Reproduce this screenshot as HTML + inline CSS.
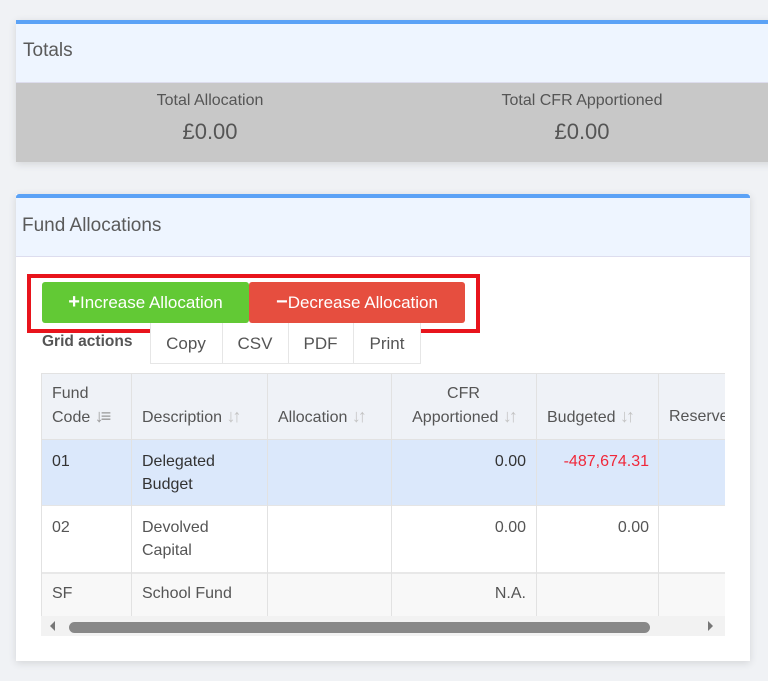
<!DOCTYPE html>
<html><head><style>
body{margin:0;width:768px;height:681px;background:#f0f2f5;font-family:"Liberation Sans",sans-serif;color:#555;position:relative;overflow:hidden}
.a{position:absolute}
.card{position:absolute;background:#fff;box-shadow:0 2px 8px rgba(0,0,0,.12)}
.c{position:absolute;text-align:center;font-size:16px}
.th{position:absolute;box-sizing:border-box;font-size:16px;line-height:23px;padding:0 11px}
.sort{color:#c4c4c4;font-size:18px;letter-spacing:-3px;font-weight:bold}
.t{position:absolute;font-size:16px;line-height:23px}
</style></head><body>
<div class="card" style="left:16px;top:20px;width:760px;height:142px">
 <div class="a" style="left:0;top:0;right:0;height:4px;background:#5ba2f6"></div>
 <div class="a" style="left:0;top:4px;right:0;height:58px;background:#eef5ff;border-bottom:1px solid #dde"></div>
 <div class="a" style="left:7px;top:20px;font-size:19px;color:#5a5a5a">Totals</div>
 <div class="a" style="left:0;top:63px;right:0;height:79px;background:#c8c8c8"></div>
 <div class="c" style="left:60px;width:268px;top:72px">Total Allocation</div>
 <div class="c" style="left:60px;width:268px;top:99px;font-size:22px">£0.00</div>
 <div class="c" style="left:432px;width:268px;top:72px">Total CFR Apportioned</div>
 <div class="c" style="left:432px;width:268px;top:99px;font-size:22px">£0.00</div>
</div>
<div class="card" style="left:16px;top:194px;width:734px;height:467px">
 <div class="a" style="left:0;top:0;right:0;height:4px;background:#5ba2f6;border-radius:3px 3px 0 0"></div>
 <div class="a" style="left:0;top:4px;right:0;height:58px;background:#eef5ff;border-bottom:1px solid #dde"></div>
 <div class="a" style="left:6px;top:21px;font-size:19px;color:#5a5a5a">Fund Allocations</div>
</div>
<div class="a" style="left:27px;top:274px;width:445px;height:51px;border:4px solid #e8141c"></div>
<div class="a" style="left:42px;top:282px;width:207px;height:41px;background:#62c935;border-radius:3px;color:#fff;font-size:17px;line-height:41px;text-align:center"><b style="font-size:20px">+</b>Increase Allocation</div>
<div class="a" style="left:249px;top:282px;width:216px;height:41px;background:#e64e3f;border-radius:3px;color:#fff;font-size:17px;line-height:41px;text-align:center"><b style="font-size:20px">−</b>Decrease Allocation</div>
<div class="a" style="left:42px;top:333px;font-size:15.5px;font-weight:bold;color:#555">Grid actions</div>
<div class="a" style="left:150px;top:323px;width:271px;height:41px;border:1px solid #e6e6e6;border-top:0;box-sizing:border-box;background:#fff"></div>
<div class="a" style="left:150px;top:334px;width:72px;text-align:center;font-size:17px">Copy</div>
<div class="a" style="left:222px;top:323px;width:1px;height:41px;background:#e6e6e6"></div>
<div class="a" style="left:222px;top:334px;width:66px;text-align:center;font-size:17px">CSV</div>
<div class="a" style="left:288px;top:323px;width:1px;height:41px;background:#e6e6e6"></div>
<div class="a" style="left:288px;top:334px;width:65px;text-align:center;font-size:17px">PDF</div>
<div class="a" style="left:353px;top:323px;width:1px;height:41px;background:#e6e6e6"></div>
<div class="a" style="left:353px;top:334px;width:68px;text-align:center;font-size:17px">Print</div>

<div class="a" style="left:41px;top:373px;width:684px;height:263px;overflow:hidden">
 <div class="a" style="left:0;top:0;width:684px;height:67px;background:#eff2f7;border-top:1px solid #e2e2e2;box-sizing:border-box"></div>
 <div class="a" style="left:0;top:67px;width:684px;height:65px;background:#dbe8fb"></div>
 <div class="a" style="left:0;top:132px;width:684px;height:67px;background:#fff;border-top:1px solid #e5e5e5"></div>
 <div class="a" style="left:0;top:199px;width:684px;height:44px;background:#f8f8f8;border-top:2px solid #e8e8e8;box-sizing:border-box"></div>
 <div class="a" style="left:0;top:243px;width:684px;height:20px;background:#f2f2f2"></div>
 <div class="a" style="left:0;top:0;width:1px;height:243px;background:#e2e2e2"></div>
 <div class="a" style="left:90px;top:0;width:1px;height:243px;background:#e2e2e2"></div>
 <div class="a" style="left:226px;top:0;width:1px;height:243px;background:#e2e2e2"></div>
 <div class="a" style="left:350px;top:0;width:1px;height:243px;background:#e2e2e2"></div>
 <div class="a" style="left:495px;top:0;width:1px;height:243px;background:#e2e2e2"></div>
 <div class="a" style="left:617px;top:0;width:1px;height:243px;background:#e2e2e2"></div>
 <div class="a" style="left:0;top:66px;width:684px;height:1px;background:#e2e2e2"></div>
 <div class="th" style="left:0;top:9px;width:90px">Fund<br>Code <span class="sort" style="color:#999">↓≡</span></div>
 <div class="th" style="left:90px;top:32px;width:136px">Description <span class="sort">↓↑</span></div>
 <div class="th" style="left:226px;top:32px;width:124px">Allocation <span class="sort">↓↑</span></div>
 <div class="th" style="left:350px;top:9px;width:145px;text-align:center">CFR<br>Apportioned <span class="sort">↓↑</span></div>
 <div class="th" style="left:495px;top:32px;width:122px">Budgeted <span class="sort">↓↑</span></div>
 <div class="th" style="left:617px;top:32px;width:100px">Reserves</div>
 <div class="t" style="left:11px;top:77px;color:#333">01</div>
 <div class="t" style="left:101px;top:77px;color:#333">Delegated<br>Budget</div>
 <div class="t" style="left:350px;width:135px;text-align:right;top:77px;color:#333">0.00</div>
 <div class="t" style="left:495px;width:113px;text-align:right;top:77px;color:#f0283a">-487,674.31</div>
 <div class="t" style="left:11px;top:143px">02</div>
 <div class="t" style="left:101px;top:143px">Devolved<br>Capital</div>
 <div class="t" style="left:350px;width:135px;text-align:right;top:143px">0.00</div>
 <div class="t" style="left:495px;width:113px;text-align:right;top:143px">0.00</div>
 <div class="t" style="left:11px;top:209px">SF</div>
 <div class="t" style="left:101px;top:209px">School Fund</div>
 <div class="t" style="left:350px;width:135px;text-align:right;top:209px">N.A.</div>
 <div class="a" style="left:9px;top:248px;width:0;height:0;border-top:5px solid transparent;border-bottom:5px solid transparent;border-right:5px solid #777"></div>
 <div class="a" style="left:28px;top:249px;width:581px;height:11px;border-radius:6px;background:#888"></div>
 <div class="a" style="left:667px;top:248px;width:0;height:0;border-top:5px solid transparent;border-bottom:5px solid transparent;border-left:5px solid #777"></div>
</div>
</body></html>
